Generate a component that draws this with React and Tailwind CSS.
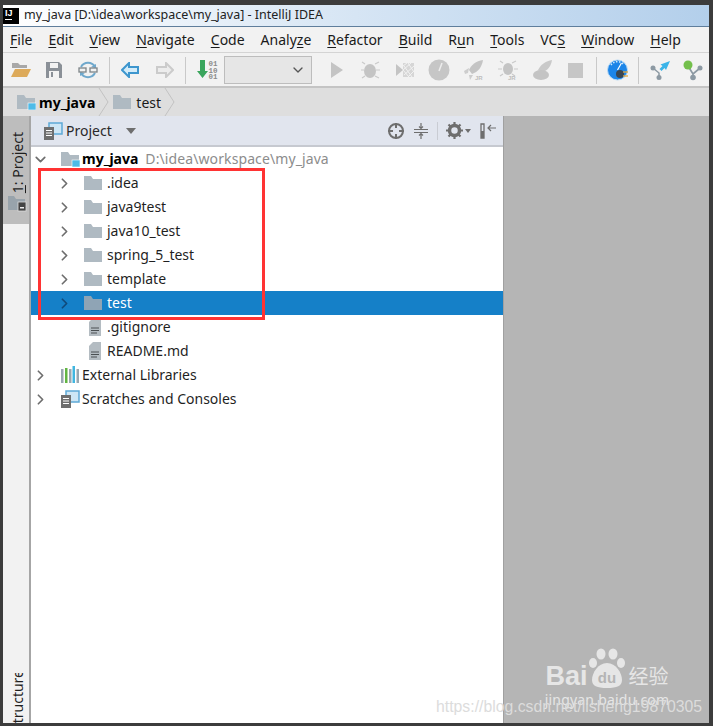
import { ChevronDown, ChevronRight } from 'lucide-react';

const FONT = "font-['Noto_Sans','Open_Sans',sans-serif]";

function Folder({ className = '', fill = '#AFBAC2', badge }) {
  return (
    <svg width="20" height="16" viewBox="0 0 20 16" className={`shrink-0 ${className}`}>
      <path d="M1 1h7l2 3h9v11H1z" fill={fill} />
      {badge && <rect x="12" y="9" width="8" height="7" fill="#4DBBE8" stroke="#fff" strokeWidth="0.6" />}
    </svg>
  );
}

function FileIcon() {
  return (
    <svg width="14" height="18" viewBox="0 0 14 18" className="shrink-0">
      <path d="M1 4l4-4h8v18H1z" fill="#B4BCC2" />
      <path d="M3 10h8M3 12.500h8M3 15h6" stroke="#4a4f52" strokeWidth="1" />
    </svg>
  );
}

function ProjectIcon({ size = 20 }) {
  return (
    <svg width={size} height={size} viewBox="0 0 20 20" className="shrink-0">
      <rect x="6" y="2" width="13" height="11" fill="#CDE6F5" stroke="#5DA9D6" strokeWidth="1.500" />
      <rect x="1" y="6" width="10" height="13" fill="#6E6E6E" />
      <path d="M3 9.500h6M3 12h6M3 14.500h6" stroke="#fff" strokeWidth="1" />
    </svg>
  );
}

function LibIcon() {
  return (
    <svg width="20" height="18" viewBox="0 0 20 18" className="shrink-0">
      <rect x="1" y="3" width="2.500" height="14" fill="#9AA7B0" />
      <rect x="5" y="2" width="2.500" height="15" fill="#62B543" />
      <rect x="9" y="3" width="2.500" height="14" fill="#9AA7B0" />
      <rect x="12.500" y="0" width="2.500" height="17" fill="#40B6E0" />
      <rect x="16.500" y="3" width="2.500" height="14" fill="#9AA7B0" />
    </svg>
  );
}

function TreeRow({ arrowX, icon, label, hint, selected, bold, tight, children }) {
  return (
    <div className={`flex h-6 items-center ${selected ? 'bg-[#1580C8] text-white' : 'text-[#1f1f1f]'}`}>
      <div className={`flex items-center ${arrowX}`}>
        {children}
        {icon}
      </div>
      <span className={`text-[14px] leading-none ${bold ? 'font-bold text-black' : ''} ${tight ? 'ml-[2px]' : 'ml-[3px]'}`}>
        {label}
      </span>
      {hint && <span className="ml-[7px] text-[14px] tracking-[0.1px] leading-none text-[#8c8c8c]">{hint}</span>}
    </div>
  );
}

function Arrow({ selected, open }) {
  const Icon = open ? ChevronDown : ChevronRight;
  return <Icon size={17} strokeWidth={2.400} className={`shrink-0 ${selected ? 'text-[#10497a]' : 'text-[#6e6e6e]'}`} />;
}

const menus = [
  ['F', 'ile'],
  ['E', 'dit'],
  ['V', 'iew'],
  ['N', 'avigate'],
  ['C', 'ode'],
  ['Analy', 'z', 'e'],
  ['R', 'efactor'],
  ['B', 'uild'],
  ['R', 'u', 'n'],
  ['T', 'ools'],
  ['VC', 'S', ''],
  ['W', 'indow'],
  ['H', 'elp'],
];

function MenuItem({ parts }) {
  if (parts.length === 3) {
    return (
      <span>
        {parts[0]}
        <span className="underline underline-offset-2">{parts[1]}</span>
        {parts[2]}
      </span>
    );
  }
  return (
    <span>
      <span className="underline underline-offset-2">{parts[0]}</span>
      {parts[1]}
    </span>
  );
}

function Sep() {
  return <div className="mx-[11px] h-[27px] w-px shrink-0 bg-[#c9c9c9]" />;
}

function Toolbar() {
  return (
    <div className="flex h-[35px] shrink-0 items-center border-b-2 border-[#c4c4c4] bg-[#f2f2f2] pt-px pl-[7px]">
      <svg width="22" height="18" viewBox="0 0 22 18" className="shrink-0">
        <path d="M2 2h6l2 2h7v3H2z" fill="#A8A8A8" />
        <path d="M5 8h16l-4 8H1z" fill="#DDAA5A" />
      </svg>
      <svg width="18" height="18" viewBox="0 0 18 18" className="ml-[13px] shrink-0">
        <path d="M1 1h13l3 3v13H1z" fill="#8A9097" />
        <rect x="5" y="2" width="8" height="5" fill="#f2f2f2" />
        <rect x="4" y="10" width="10" height="7" fill="#f2f2f2" />
        <rect x="6" y="11" width="2" height="5" fill="#8A9097" />
      </svg>
      <svg width="20" height="20" viewBox="0 0 20 20" className="ml-[15px] shrink-0">
        <path d="M3 7a8 8 0 0 1 14 0M17 13a8 8 0 0 1-14 0" fill="none" stroke="#6FA8CC" strokeWidth="2" />
        <path d="M13 7l5 1 0-4zM7 13l-5-1 0 4z" fill="#6FA8CC" />
        <rect x="1" y="8" width="7" height="4" fill="#f2f2f2" stroke="#7d8488" strokeWidth="1.300" />
        <rect x="12" y="8" width="7" height="4" fill="#f2f2f2" stroke="#7d8488" strokeWidth="1.300" />
      </svg>
      <Sep />
      <svg width="18" height="16" viewBox="0 0 18 16" className="shrink-0">
        <path d="M8 1L1 8l7 7v-4h9V5H8z" fill="#D4ECF9" stroke="#3D96CE" strokeWidth="2" />
      </svg>
      <svg width="18" height="16" viewBox="0 0 18 16" className="ml-[17px] shrink-0">
        <path d="M10 1l7 7-7 7v-4H1V5h9z" fill="#ececec" stroke="#cbcbcb" strokeWidth="2" />
      </svg>
      <Sep />
      <svg width="21" height="22" viewBox="0 0 21 22" className="shrink-0">
        <path d="M3 1h5v11h3l-5.500 7L0 12h3z" fill="#3BA55C" />
        <g fontFamily="Liberation Mono, monospace" fontSize="7.500" fontWeight="700" fill="#8b8b8b">
          <text x="11.500" y="7">01</text>
          <text x="11.500" y="13.500">10</text>
          <text x="11.500" y="20">01</text>
        </g>
      </svg>
      <div className="ml-[6px] flex h-[28px] w-[88px] shrink-0 items-center justify-end border border-[#bdbdbd] bg-[#e6e6e6] pr-[5px]">
        <ChevronDown size={16} strokeWidth={2} className="text-[#555]" />
      </div>
      <svg width="14" height="18" viewBox="0 0 14 18" className="ml-[18px] shrink-0">
        <path d="M1 1l12 8-12 8z" fill="#c4c4c4" />
      </svg>
      <svg width="20" height="20" viewBox="0 0 20 20" className="ml-[17px] shrink-0">
        <ellipse cx="9" cy="11" rx="6" ry="7" fill="#c4c4c4" />
        <path d="M14 4l4-2M15 10h4M14 16l4 2M4 4L1 2M3 10H0M4 16l-3 2" stroke="#c9c9c9" strokeWidth="1.200" />
      </svg>
      <svg width="20" height="20" viewBox="0 0 20 20" className="ml-[14px] shrink-0">
        <path d="M1 4l7 6-7 6z" fill="#c4c4c4" />
        <path d="M8 3h11v14H8z" fill="#d6d6d6" />
        <path d="M8 6l4-3M8 10l8-7M9 15l10-9M13 17l6-6M9 6l8 11M8 10l6 7M13 3l6 9" stroke="#f2f2f2" strokeWidth="1" />
      </svg>
      <svg width="22" height="22" viewBox="0 0 22 22" className="ml-[13px] shrink-0">
        <circle cx="11" cy="11" r="10.500" fill="#c6c6c6" />
        <path d="M11 12l3-8" stroke="#ededed" strokeWidth="1.500" />
      </svg>
      <svg width="21" height="21" viewBox="0 0 21 21" className="ml-[13px] shrink-0">
        <path d="M20 0C13 1 8 5 6 10l3 4C15 12 19 7 20 0z" fill="#c4c4c4" />
        <path d="M1 11l5-3-1 5-3 1zM7 20l3-5-4 0z" fill="#cdcdcd" />
        <text x="12" y="20" fontFamily="Liberation Sans, sans-serif" fontSize="6" fontWeight="700" fill="#bdbdbd">JR</text>
      </svg>
      <svg width="21" height="21" viewBox="0 0 21 21" className="ml-[14px] shrink-0">
        <ellipse cx="10" cy="9" rx="5" ry="6" fill="#c4c4c4" />
        <path d="M14 3l4-2M16 9h4M14 14l3 2M5 3L2 1M4 9H0M5 14l-3 2" stroke="#c9c9c9" strokeWidth="1.200" />
        <text x="10" y="20" fontFamily="Liberation Sans, sans-serif" fontSize="6" fontWeight="700" fill="#bdbdbd">JR</text>
      </svg>
      <svg width="21" height="20" viewBox="0 0 21 20" className="ml-[13px] shrink-0">
        <path d="M20 0C14 1 9 4 6 10l5 2C16 10 19 6 20 0z" fill="#c9c9c9" />
        <ellipse cx="9" cy="15" rx="8" ry="5" fill="#c4c4c4" />
      </svg>
      <div className="mr-[2px] ml-[15px] h-[15px] w-[15px] shrink-0 bg-[#c6c6c6]" />
      <Sep />
      <svg width="22" height="22" viewBox="0 0 22 22" className="-mr-[2px] -ml-px shrink-0">
        <circle cx="10.500" cy="11" r="10" fill="#1C85E8" stroke="#B7D9F5" strokeWidth="1" />
        <path d="M10.500 11l4-7" stroke="#fff" strokeWidth="1.200" />
        <path d="M4 6a8 8 0 0 1 13 0" fill="none" stroke="#cfe7fb" strokeWidth="1.500" strokeDasharray="1.500 1.500" />
        <circle cx="13" cy="15" r="4" fill="#3b4650" />
        <path d="M16 13h5" stroke="#E5A83B" strokeWidth="1.300" />
        <path d="M16 17h5" stroke="#E5A83B" strokeWidth="1.300" />
      </svg>
      <Sep />
      <svg width="21" height="21" viewBox="0 0 21 21" className="shrink-0">
        <path d="M3 8l6 5 0 5" fill="none" stroke="#8C99A3" strokeWidth="1.500" />
        <circle cx="3" cy="8" r="2.500" fill="#8C99A3" />
        <circle cx="9" cy="17.500" r="2.500" fill="#8C99A3" />
        <path d="M20 1l-4 9 -1.500-2-3 3-2-2 3-3-2-1.500z" fill="#3BB4E8" />
      </svg>
      <svg width="20" height="21" viewBox="0 0 20 21" className="ml-[12px] shrink-0">
        <path d="M5 6l5 8 7-6M10 14v4" fill="none" stroke="#8C99A3" strokeWidth="1.700" />
        <circle cx="5" cy="5" r="4.500" fill="#73BF4B" />
        <circle cx="17" cy="8" r="2.500" fill="#8C99A3" />
        <circle cx="10" cy="17.500" r="2.800" fill="#8C99A3" />
      </svg>
    </div>
  );
}

function Breadcrumb() {
  return (
    <div className="flex h-[28px] shrink-0 items-center bg-[#dedede] pl-[13px] text-[14px] text-[#1a1a1a]">
      <Folder badge />
      <span className="ml-[3px] font-bold text-black">my_java</span>
      <svg width="12" height="28" viewBox="0 0 12 28" className="ml-[3px] shrink-0">
        <path d="M1 0l9 14-9 14" fill="none" stroke="#c2c2c2" strokeWidth="1" />
      </svg>
      <Folder className="ml-[2px]" />
      <span className="ml-[4px]">test</span>
      <svg width="12" height="28" viewBox="0 0 12 28" className="ml-[3px] shrink-0">
        <path d="M1 0l9 14-9 14" fill="none" stroke="#c2c2c2" strokeWidth="1" />
      </svg>
    </div>
  );
}

function Sidebar() {
  return (
    <div className="flex w-[28px] shrink-0 flex-col justify-between border-r-2 border-[#a6a6a6] bg-[#f2f2f2]">
      <div className="flex h-[108px] flex-col items-center bg-[#bdbdbd] pt-[16px] pl-[4px]">
        <span className="rotate-180 text-[14px] leading-none whitespace-nowrap text-[#1f1f1f] [writing-mode:vertical-rl]">
          <span className="underline">1</span>: Project
        </span>
        <svg width="20" height="16" viewBox="0 0 20 16" className="mt-[3px] mr-[2px] shrink-0">
          <path d="M1 0h6l2 3h9v11H1z" fill="#98A3AB" />
          <rect x="11" y="6" width="8" height="9" fill="#444" stroke="#ddd" strokeWidth="0.800" />
          <rect x="13" y="11" width="4" height="1.500" fill="#eee" />
        </svg>
      </div>
      <div className="flex h-[50px] items-end justify-center overflow-hidden pl-[4px]">
        <span className="rotate-180 text-[14px] leading-none whitespace-nowrap text-[#1f1f1f] [writing-mode:vertical-rl]">
          tructure
        </span>
      </div>
    </div>
  );
}

function ProjectPanel() {
  const folders = ['.idea', 'java9test', 'java10_test', 'spring_5_test', 'template'];
  return (
    <div className="flex w-[472px] shrink-0 flex-col bg-white">
      <div className="flex h-[31px] shrink-0 items-center border-b-2 border-[#c6c9d0] bg-[#e1e5ee] pl-[12px] text-[#2a2a2a]">
        <ProjectIcon />
        <span className="ml-[3px] text-[14px]">Project</span>
        <svg width="10" height="6" viewBox="0 0 10 6" className="ml-[14px] shrink-0">
          <path d="M0 0h10L5 6z" fill="#6e6e6e" />
        </svg>
        <div className="ml-auto flex items-center pr-[7px]">
          <svg width="18" height="18" viewBox="0 0 18 18" className="shrink-0">
            <circle cx="9" cy="9" r="7" fill="none" stroke="#6e6e6e" strokeWidth="2" />
            <path d="M9 1v5M9 12v5M1 9h5M12 9h5" stroke="#6e6e6e" strokeWidth="2" />
          </svg>
          <svg width="16" height="16" viewBox="0 0 16 16" className="ml-[8px] shrink-0">
            <path d="M1 6.500h14M1 9.500h14" stroke="#6e6e6e" strokeWidth="1" />
            <path d="M8 0v5M6 3.500l2 2 2-2M8 16v-5M6 12.500l2-2 2 2" fill="none" stroke="#6e6e6e" strokeWidth="1.200" />
          </svg>
          <div className="mx-[8px] h-[18px] w-px bg-[#c9ccd3]" />
          <svg width="17" height="17" viewBox="0 0 17 17" className="shrink-0">
            <circle cx="8.500" cy="8.500" r="5" fill="none" stroke="#6e6e6e" strokeWidth="3.500" />
            <path d="M8.500 0v3M8.500 14v3M0 8.500h3M14 8.500h3M2.500 2.500l2 2M12.500 12.500l2 2M14.500 2.500l-2 2M4.500 12.500l-2 2" stroke="#6e6e6e" strokeWidth="2.200" />
          </svg>
          <svg width="6" height="4" viewBox="0 0 6 4" className="ml-[2px] shrink-0">
            <path d="M0 0h6L3 4z" fill="#6e6e6e" />
          </svg>
          <svg width="16" height="16" viewBox="0 0 16 16" className="ml-[9px] shrink-0">
            <path d="M1 1h3v14H1z" fill="none" stroke="#6e6e6e" strokeWidth="1.300" />
            <rect x="1" y="8" width="3" height="7" fill="#6e6e6e" />
            <path d="M16 5H8M11 2L8 5l3 3" fill="none" stroke="#6e6e6e" strokeWidth="1.200" />
          </svg>
        </div>
      </div>
      <div className="flex-1">
        <TreeRow
          arrowX="ml-[1px] w-[48px] gap-[11px]"
          icon={<Folder badge />}
          label="my_java"
          bold
          tight
          hint="D:\idea\workspace\my_java"
        >
          <Arrow open />
        </TreeRow>
        {folders.map((name) => (
          <TreeRow key={name} arrowX="ml-[25px] w-[48px] gap-[10px]" icon={<Folder />} label={name}>
            <Arrow />
          </TreeRow>
        ))}
        <TreeRow arrowX="ml-[25px] w-[48px] gap-[10px]" icon={<Folder fill="#8FA4B5" />} label="test" selected>
          <Arrow selected />
        </TreeRow>
        <TreeRow arrowX="ml-[57px] w-[16px]" icon={<FileIcon />} label=".gitignore" />
        <TreeRow arrowX="ml-[57px] w-[16px]" icon={<FileIcon />} label="README.md" />
        <TreeRow arrowX="ml-[1px] w-[48px] gap-[11px]" icon={<LibIcon />} label="External Libraries" tight>
          <Arrow />
        </TreeRow>
        <TreeRow arrowX="ml-[1px] w-[48px] gap-[11px]" icon={<ProjectIcon />} label="Scratches and Consoles" tight>
          <Arrow />
        </TreeRow>
      </div>
    </div>
  );
}

function Watermark() {
  return (
    <div className="absolute top-[648px] left-[545px] flex w-[124px] flex-col items-center text-[#e6e6e6]">
      <div className="flex h-[40px] items-end">
        <span className="font-['Liberation_Sans',sans-serif] text-[27px] leading-[24px] font-bold">Bai</span>
        <svg width="38" height="40" viewBox="0 0 38 40" className="shrink-0">
          <ellipse cx="13" cy="6" rx="4.500" ry="5.500" fill="#e6e6e6" />
          <ellipse cx="25" cy="6" rx="4.500" ry="5.500" fill="#e6e6e6" />
          <ellipse cx="5" cy="15" rx="4" ry="5" fill="#e6e6e6" />
          <ellipse cx="33" cy="15" rx="4" ry="5" fill="#e6e6e6" />
          <path d="M19 15c-9 0-15 10-15 17 0 6 5 8 15 8s15-2 15-8c0-7-6-17-15-17z" fill="#e6e6e6" />
          <text x="19" y="35" textAnchor="middle" fontFamily="Liberation Sans, sans-serif" fontSize="15" fontWeight="700" fill="#b5b5b5">du</text>
        </svg>
        <span className="ml-[3px] font-['Noto_Sans_CJK_SC',sans-serif] text-[20px] leading-[24px]">经验</span>
      </div>
      <span className="mt-[2px] text-[14px] leading-[20px] tracking-[0.2px] whitespace-nowrap">jingyan.baidu.com</span>
    </div>
  );
}

export default function App() {
  return (
    <div className={`relative h-[726px] w-[713px] overflow-hidden bg-[#3c3c3c] pt-[5px] pr-[4px] pb-[3px] pl-[3px] ${FONT}`}>
      <div className="flex h-full flex-col bg-white">
        <div className="flex h-[22px] shrink-0 items-center border-b border-[#5f7e9c] bg-gradient-to-r from-white via-[#d6e5f4] to-[#b3cfeb]">
          <div className="flex h-[16px] w-[16px] flex-col items-start bg-black pl-[2px] font-['Liberation_Sans',sans-serif] text-[9px] leading-[10px] font-bold text-white">
            IJ
            <div className="mt-px h-px w-[7px] bg-white" />
          </div>
          <span className="ml-[5px] text-[12.5px] leading-none text-[#222]">my_java [D:\idea\workspace\my_java] - IntelliJ IDEA</span>
        </div>
        <div className="flex h-[26px] shrink-0 items-center gap-[16px] border-b border-[#d4d4d4] bg-[#f2f2f2] pl-[7px] text-[14px] text-[#1a1a1a]">
          {menus.map((parts) => (
            <MenuItem key={parts.join('')} parts={parts} />
          ))}
        </div>
        <Toolbar />
        <Breadcrumb />
        <div className="flex min-h-0 flex-1">
          <Sidebar />
          <ProjectPanel />
          <div className="flex-1 border-l border-[#a0a0a0] bg-[#b5b5b5]" />
        </div>
      </div>

      {/* annotation + watermarks sit on top of the window */}
      <div className="absolute top-[168px] left-[38px] h-[152px] w-[227px] border-[3px] border-[#FF3333]" />
      <Watermark />
      <div className="absolute top-[697px] left-[436px] font-['Liberation_Sans',sans-serif] text-[15.8px] leading-[20px] whitespace-nowrap text-[#dcdcdc]">
        https://blog.csdn.net/lisheng19870305
      </div>
    </div>
  );
}
